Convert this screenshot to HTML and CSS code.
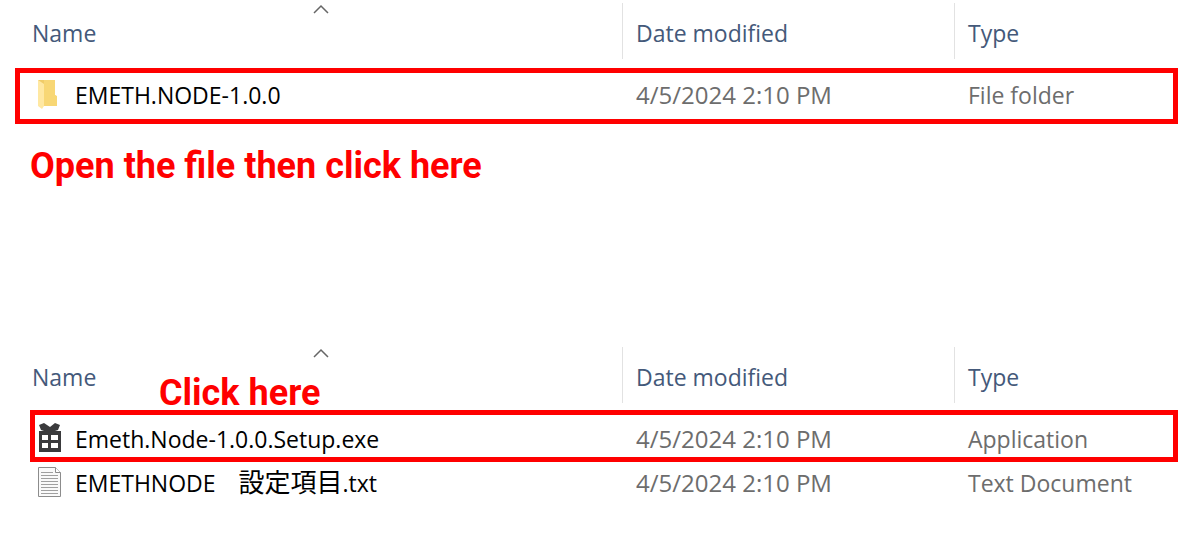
FILE: index.html
```
<!DOCTYPE html>
<html lang="en">
<head>
  <meta charset="UTF-8">
  <meta name="viewport" content="width=device-width, initial-scale=1.0">
  <title>Emeth Node Setup</title>
  <link rel="stylesheet" href="styles.css">
</head>
<body>
  <main>
    <section class="step">
      <table class="files">
        <thead>
          <tr>
            <th class="name">
              <button type="button">Name</button>
              <svg class="sort" width="18" height="10" viewBox="0 0 18 10"><path d="M2 9l7-7 7 7" fill="none" stroke="#666" stroke-width="1.5"/></svg>
            </th>
            <th class="date"><button type="button">Date modified</button></th>
            <th class="type"><button type="button">Type</button></th>
          </tr>
        </thead>
        <tbody>
          <tr class="highlight">
            <td>
              <div class="file">
                <svg width="26" height="32" viewBox="0 0 26 32">
                  <path d="M2 1h17v15l2 2v9H7z" fill="#f0cc69"/>
                  <path d="M8 1h11v15l2 1v10H8z" fill="#f8d775"/>
                  <path d="M2 1l6 4v22l-2 3-4-3z" fill="#ffe8a2"/>
                </svg>
                <span>EMETH.NODE-1.0.0</span>
              </div>
            </td>
            <td class="when">4/5/2024 2:10 PM</td>
            <td>File folder</td>
          </tr>
        </tbody>
      </table>
      <p class="note">Open the file then click here</p>
    </section>

    <section class="step">
      <p class="note note-over">Click here</p>
      <table class="files">
        <thead>
          <tr>
            <th class="name">
              <button type="button">Name</button>
              <svg class="sort" width="18" height="10" viewBox="0 0 18 10"><path d="M2 9l7-7 7 7" fill="none" stroke="#666" stroke-width="1.5"/></svg>
            </th>
            <th class="date"><button type="button">Date modified</button></th>
            <th class="type"><button type="button">Type</button></th>
          </tr>
        </thead>
        <tbody>
          <tr class="highlight highlight-inner">
            <td>
              <div class="file">
                <svg width="26" height="32" viewBox="0 0 26 32">
                  <path d="M3 2l5-2 6 4 5-4 5 2-2 5-3 1h6v21H3V8h5L5 7z" fill="#3a3a3c"/>
                  <path d="M6 12h6v5H6zM15 12h7v5h-7zM6 20h6v5H6zM15 20h7v5h-7z" fill="#fff"/>
                </svg>
                <span>Emeth.Node-1.0.0.Setup.exe</span>
              </div>
            </td>
            <td class="when">4/5/2024 2:10 PM</td>
            <td>Application</td>
          </tr>
          <tr>
            <td>
              <div class="file">
                <svg width="26" height="32" viewBox="0 0 26 32">
                  <path d="M2.500 .5h17l5 5v24h-22z" fill="#fafafa" stroke="#8c8c8c"/>
                  <path d="M19.500 .5v5h5" fill="#fff" stroke="#8c8c8c"/>
                  <path d="M5 5.500h12M5 8.500h17M5 11.500h17M5 14.500h17M5 17.500h17M5 20.500h17M5 23.500h17M5 26.500h17" stroke="#a0a0a0"/>
                </svg>
                <span>EMETHNODE　<span class="jp" lang="ja">設定項目</span>.txt</span>
              </div>
            </td>
            <td class="when">4/5/2024 2:10 PM</td>
            <td>Text Document</td>
          </tr>
        </tbody>
      </table>
    </section>
  </main>
</body>
</html>
```
FILE: styles.css
```
body {
  margin: 0;
  background: #fff;
  color: #000;
  font-family: "Open Sans", "Noto Sans CJK JP", sans-serif;
  font-size: 23px;
  line-height: 32px;
}

main {
  padding: 3px 22px 0 15px;
}

.step {
  position: relative;
  min-height: 344px;
}

.step:last-child {
  min-height: 0;
}

.files {
  width: 100%;
  table-layout: fixed;
  border-collapse: separate;
  border-spacing: 0;
}

.files th {
  position: relative;
  height: 56px;
  padding: 4px 0 0 13px;
  border-left: 1px solid #e2e2e2;
  box-sizing: border-box;
  text-align: left;
}

.files th.name {
  padding-left: 17px;
  border-left: none;
}

.files .date {
  width: 332px;
}

.files .type {
  width: 224px;
}

.files button {
  padding: 0;
  border: none;
  background: none;
  color: #44597a;
  font: inherit;
  font-weight: 400;
  cursor: pointer;
}

.sort {
  position: absolute;
  top: 1px;
  left: 49%;
}

/* space between the header and the first row */
.files tbody::before {
  content: "";
  display: block;
  height: 15px;
}

.files td {
  height: 42px;
  padding: 0 0 2px 14px;
  color: #6d6d6d;
  white-space: nowrap;
}

.files td.when {
  font-size: 24px;
}

.files td:first-child {
  padding-left: 21px;
  color: #000;
}

.file {
  display: flex;
  align-items: center;
  gap: 13px;
}

.file svg {
  flex: none;
}

.jp {
  font-family: "Noto Sans CJK JP", sans-serif;
  font-size: 26px;
  line-height: 24px;
}

.highlight {
  position: relative;
}

.highlight td:first-child::before {
  content: "";
  position: absolute;
  inset: -6px 0;
  border: 5px solid #f00;
  pointer-events: none;
}

.highlight-inner td:first-child::before {
  inset: -8px 0 0 15px;
}

.note {
  margin: 26px 0 0 15px;
  color: #f00;
  font-family: Roboto, sans-serif;
  font-size: 36px;
  font-weight: 700;
  line-height: 44px;
}

.note-over {
  position: absolute;
  top: 24px;
  left: 144px;
  z-index: 1;
  margin: 0;
}
```
